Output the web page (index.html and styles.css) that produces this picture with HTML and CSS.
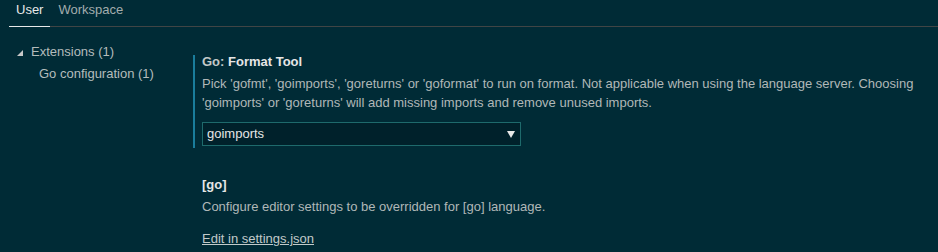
FILE: index.html
```html
<!DOCTYPE html>
<html>
<head>
<meta charset="utf-8">
<link rel="stylesheet" href="styles.css">
</head>
<body>
<div class="tabs">
  <div class="tab active">User</div>
  <div class="tab">Workspace</div>
</div>
<div class="main">
  <div class="sidebar">
    <div class="row group">
      <svg class="twistie" width="6" height="6" viewBox="0 0 6 6"><polygon points="0,6 6,6 6,0" fill="#c8c8c8"/></svg>
      <span>Extensions (1)</span>
    </div>
    <div class="row child">Go configuration (1)</div>
  </div>
  <div class="content">
    <div class="setting focused">
      <div class="title"><span class="cat">Go: </span>Format Tool</div>
      <div class="desc">Pick 'gofmt', 'goimports', 'goreturns' or 'goformat' to run on format. Not applicable when using the language server. Choosing 'goimports' or 'goreturns' will add missing imports and remove unused imports.</div>
      <div class="select">
        <span>goimports</span>
        <svg width="8" height="7" viewBox="0 0 8 7"><polygon points="0,0 8,0 4,7" fill="#e8e8e8"/></svg>
      </div>
    </div>
    <div class="setting lang">
      <div class="title">[go]</div>
      <div class="desc">Configure editor settings to be overridden for [go] language.</div>
      <a class="link">Edit in settings.json</a>
    </div>
  </div>
</div>
</body>
</html>
```
FILE: styles.css
```css
html, body {
  margin: 0;
  padding: 0;
  background: #002b36;
  font-family: "Liberation Sans", Arial, sans-serif;
  font-size: 13px;
  color: #b8bfbf;
  width: 938px;
  height: 252px;
  overflow: hidden;
}
.tabs {
  display: flex;
  margin-left: 9px;
  border-bottom: 1px solid #404545;
  height: 26px;
}
.tab {
  padding: 1px 7px 7px;
  line-height: 18px;
  color: #a3adad;
}
.tab + .tab {
  padding-left: 8px;
}
.tab.active {
  color: #e8e8e8;
  border-bottom: 1px solid #e8e8e8;
  margin-bottom: -1px;
  height: 18px;
}
.main {
  display: flex;
}
.sidebar {
  width: 193px;
  flex: none;
  padding-top: 14px;
}
.row {
  line-height: 22px;
  height: 22px;
  color: #b4bcbc;
  white-space: nowrap;
}
.group {
  display: flex;
  align-items: center;
  padding-left: 17px;
}
.twistie {
  margin-right: 8px;
  margin-top: 2px;
}
.child {
  padding-left: 39px;
}
.content {
  flex: 1;
  padding-top: 28px;
}
.setting {
  border-left: 2px solid transparent;
  padding-left: 7px;
  padding-bottom: 2px;
}
.setting.focused {
  border-left-color: #1a7d9c;
}
.focused .title {
  padding-top: 1px;
}
.title {
  font-weight: bold;
  line-height: 12px;
  color: #e6e6e6;
}
.cat {
  color: #c2c8c8;
}
.desc {
  margin-top: 7px;
  line-height: 19px;
  color: #b0b8b8;
  padding-right: 20px;
}
.focused .desc {
  margin-top: 6px;
}
.select {
  margin-top: 10px;
  width: 308px;
  height: 22px;
  border: 1px solid #1e6a6c;
  background: #00212b;
  display: flex;
  align-items: center;
  justify-content: space-between;
  padding: 0 5px 0 4px;
  box-sizing: content-box;
  color: #e6e6e6;
}
.select span {
  line-height: 22px;
}
.select svg {
  margin-top: 1px;
}
.setting.lang {
  padding-top: 28px;
}
.lang .title {
  line-height: 18px;
}
.lang .desc {
  margin-top: 3px;
}
.link {
  display: block;
  margin-top: 13px;
  line-height: 19px;
  color: #c2caca;
  text-decoration: underline;
}
```
